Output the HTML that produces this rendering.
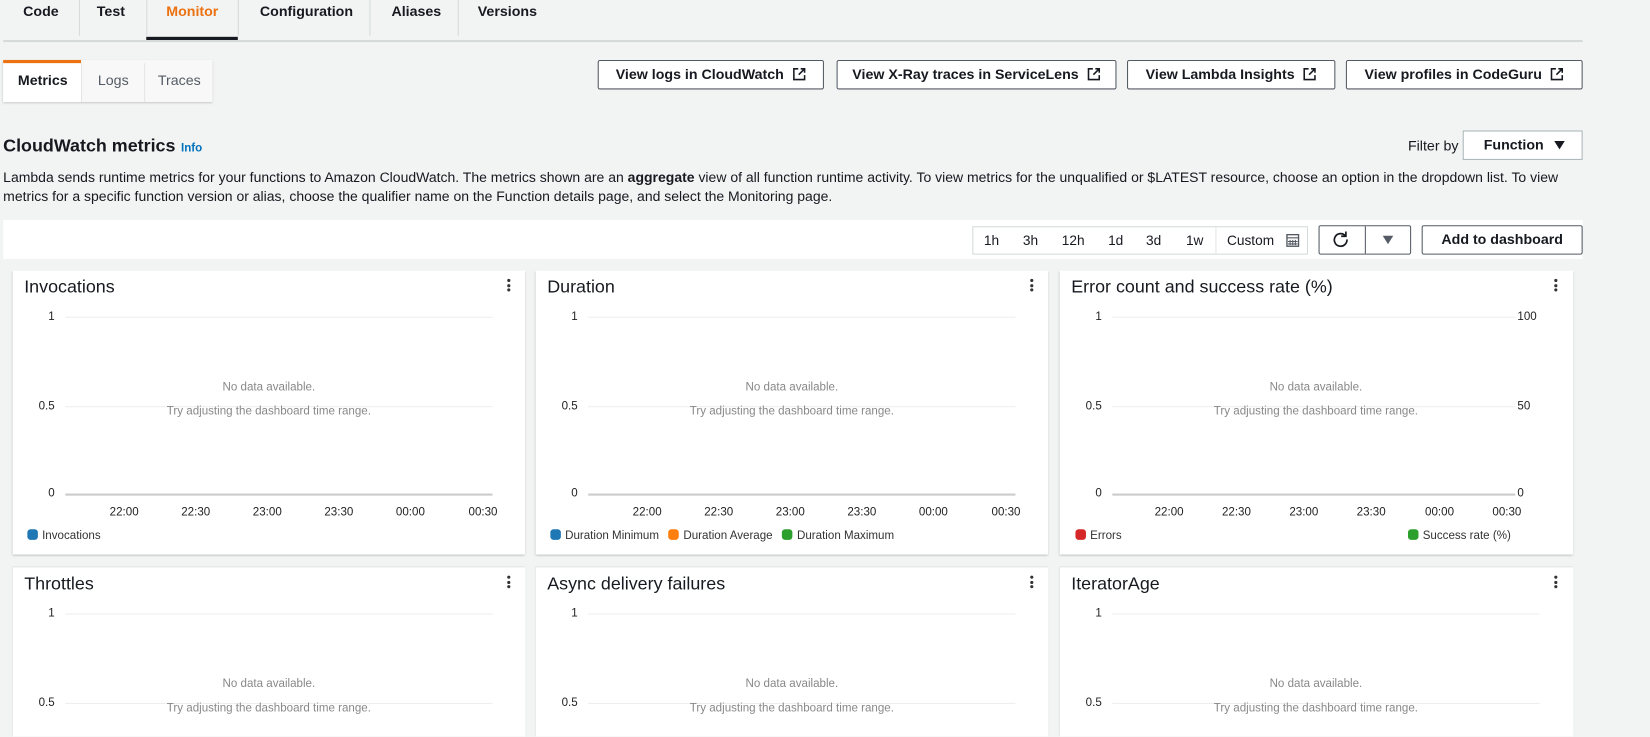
<!DOCTYPE html>
<html><head><meta charset="utf-8">
<style>
html,body{margin:0;padding:0;width:1650px;height:737px;overflow:hidden;background:#f2f3f3}
#s{position:absolute;left:0;top:0;width:1568px;height:700px;overflow:hidden;transform:scale(1.05230);transform-origin:0 0;font-family:"Liberation Sans",Arial,sans-serif;color:#16191f}
.a{position:absolute;white-space:nowrap}
.tab{font-size:13.5px;top:3px;font-weight:bold;color:#16191f}
.sep{position:absolute;top:0;width:1px;height:34px;background:#d5dbdb}
.btn{position:absolute;top:57px;height:26px;border:1px solid #545b64;background:#fff;border-radius:2px;font-size:13.5px;font-weight:bold;line-height:26px;text-align:center;box-sizing:content-box}
.btn svg{vertical-align:-2px;margin-left:8px}
.w{position:absolute;width:487px;height:270px;background:#fff;box-shadow:0 1px 2px rgba(0,0,0,.3)}
.w.r2{height:161px;box-shadow:0 0 1px rgba(0,0,0,.3)}
.w .t{position:absolute;left:11px;top:6px;font-size:17px;font-family:Arial,"Liberation Sans",sans-serif}
.w .k{position:absolute;left:470px;top:8px;width:3px}
.w .k i{display:block;width:3px;height:3px;background:#333;border-radius:50%;margin-bottom:1.5px}
.yl{position:absolute;font-size:11px;color:#222;text-align:right;width:30px;left:10px}
.yr{position:absolute;font-size:11px;color:#222;left:435px}
.gl{position:absolute;left:50px;width:406px;height:1px;background:#eee}
.xl{position:absolute;font-size:11px;color:#222;top:224px;width:40px;margin-left:-20px;text-align:center}
.nd{position:absolute;left:0;width:487px;text-align:center;font-size:11px;color:#888}
.lg{position:absolute;top:246px;font-size:11px;color:#333}
.lg b{display:inline-block;width:10px;height:10px;border-radius:3px;vertical-align:-1px;margin-right:4px}
</style></head><body><div id="s">

<div class="a tab" style="left:22px">Code</div>
<div class="a tab" style="left:92px">Test</div>
<div class="a tab" style="left:158px;color:#ec7211">Monitor</div>
<div class="a tab" style="left:247px">Configuration</div>
<div class="a tab" style="left:372px">Aliases</div>
<div class="a tab" style="left:454px">Versions</div>
<div class="sep" style="left:75px"></div><div class="sep" style="left:139px"></div><div class="sep" style="left:226px"></div><div class="sep" style="left:351px"></div><div class="sep" style="left:435px"></div>
<div class="a" style="left:3px;top:38px;width:1501px;height:2px;background:#d5dbdb"></div>
<div class="a" style="left:139px;top:35px;width:87px;height:3px;background:#16191f"></div>

<div class="a" style="left:3px;top:57px;width:199px;height:40px;background:#f8f8f8;box-shadow:0 1px 2px rgba(0,0,0,.25)"></div>
<div class="a" style="left:3px;top:57px;width:74px;height:40px;background:#fff"></div>
<div class="a" style="left:3px;top:57px;width:74px;height:3px;background:#ec7211"></div>
<div class="a" style="left:77px;top:60px;width:1px;height:37px;background:#e5e5e5"></div>
<div class="a" style="left:137px;top:60px;width:1px;height:37px;background:#e5e5e5"></div>
<div class="a" style="left:17px;top:69px;font-size:13.5px;font-weight:bold">Metrics</div>
<div class="a" style="left:93px;top:69px;font-size:13.5px;color:#545b64">Logs</div>
<div class="a" style="left:150px;top:69px;font-size:13.5px;color:#545b64">Traces</div>

<svg width="0" height="0" style="position:absolute"><defs><symbol id="ex" viewBox="0 0 14 14"><path d="M6 1.5H1.5v11h11V8M8.5 1.5h4v4M12.5 1.5L6.5 7.5" fill="none" stroke="#16191f" stroke-width="1.6"/></symbol></defs></svg>
<div class="btn" style="left:568px;width:213px">View logs in CloudWatch<svg width="13" height="13"><use href="#ex"/></svg></div>
<div class="btn" style="left:795px;width:264px">View X-Ray traces in ServiceLens<svg width="13" height="13"><use href="#ex"/></svg></div>
<div class="btn" style="left:1071px;width:196px">View Lambda Insights<svg width="13" height="13"><use href="#ex"/></svg></div>
<div class="btn" style="left:1279px;width:223px">View profiles in CodeGuru<svg width="13" height="13"><use href="#ex"/></svg></div>

<div class="a" style="left:3px;top:129px;font-size:17px;font-weight:bold">CloudWatch metrics</div>
<div class="a" style="left:172px;top:135px;font-size:11px;font-weight:bold;color:#0073bb">Info</div>
<div class="a" style="left:1338px;top:131px;font-size:13.5px">Filter by</div>
<div class="a" style="left:1390px;top:124px;width:112px;height:26px;border:1px solid #aab7b8;background:#fff;font-size:13.5px;font-weight:bold;line-height:26px"><span style="margin-left:19px">Function</span><span style="position:absolute;left:86px;top:9px;width:0;height:0;border-left:5px solid transparent;border-right:5px solid transparent;border-top:8px solid #16191f"></span></div>
<div class="a" style="left:3px;top:160px;font-size:13.3px;line-height:18px">Lambda sends runtime metrics for your functions to Amazon CloudWatch. The metrics shown are an <b>aggregate</b> view of all function runtime activity. To view metrics for the unqualified or $LATEST resource, choose an option in the dropdown list. To view<br>metrics for a specific function version or alias, choose the qualifier name on the Function details page, and select the Monitoring page.</div>

<div class="a" style="left:3px;top:209px;width:1501px;height:37px;background:#fff"></div>
<div class="a" style="left:924px;top:215px;width:317px;height:25px;border:1px solid #d5dbdb;background:#fff;font-size:13px;color:#16191f;line-height:26px">
<span class="a" style="left:10px">1h</span><span class="a" style="left:47px">3h</span><span class="a" style="left:84px">12h</span><span class="a" style="left:128px">1d</span><span class="a" style="left:164px">3d</span><span class="a" style="left:202px">1w</span>
<span class="a" style="left:230px;top:0;width:1px;height:25px;background:#e5e5e5"></span>
<span class="a" style="left:241px">Custom</span>
<svg class="a" style="left:297px;top:6px" width="13" height="13" viewBox="0 0 13 13"><rect x="1" y="1" width="11" height="11" fill="none" stroke="#545b64" stroke-width="1.3"/><path d="M1 4h11M4 6v5M6.5 6v5M9 6v5M2 7.5h9M2 9.8h9" stroke="#545b64" stroke-width="1"/></svg></div>
<div class="a" style="left:1253px;top:214px;width:86px;height:26px;border:1px solid #545b64;background:#fff;border-radius:2px"></div>
<div class="a" style="left:1297px;top:215px;width:1px;height:26px;background:#545b64"></div>
<svg class="a" style="left:1266px;top:219px" width="16" height="16" viewBox="0 0 16 16"><path d="M12.5 5A6 6 0 1 0 14 8.5" fill="none" stroke="#16191f" stroke-width="1.6"/><path d="M13 1v4.5H8.5" fill="none" stroke="#16191f" stroke-width="1.6"/></svg>
<div class="a" style="left:1314px;top:224px;width:0;height:0;border-left:5px solid transparent;border-right:5px solid transparent;border-top:8px solid #545b64"></div>
<div class="btn" style="left:1351px;top:214px;width:151px">Add to dashboard</div>

<div class="w" style="left:12px;top:257px">
<div class="t">Invocations</div><div class="k"><i></i><i></i><i></i></div>
<div class="yl" style="top:38px">1</div><div class="yl" style="top:123px">0.5</div><div class="yl" style="top:206px">0</div>
<div class="gl" style="top:44px"></div><div class="gl" style="top:129px"></div><div class="gl" style="top:212px;background:#ccc;height:2px"></div>
<div class="xl" style="left:106px">22:00</div><div class="xl" style="left:174px">22:30</div><div class="xl" style="left:242px">23:00</div><div class="xl" style="left:310px">23:30</div><div class="xl" style="left:378px">00:00</div><div class="xl" style="left:447px">00:30</div>
<div class="nd" style="top:105px">No data available.</div><div class="nd" style="top:128px">Try adjusting the dashboard time range.</div>
<div class="lg" style="left:14px"><b style="background:#1f77b4"></b>Invocations</div>
</div>

<div class="w" style="left:509px;top:257px">
<div class="t">Duration</div><div class="k"><i></i><i></i><i></i></div>
<div class="yl" style="top:38px">1</div><div class="yl" style="top:123px">0.5</div><div class="yl" style="top:206px">0</div>
<div class="gl" style="top:44px"></div><div class="gl" style="top:129px"></div><div class="gl" style="top:212px;background:#ccc;height:2px"></div>
<div class="xl" style="left:106px">22:00</div><div class="xl" style="left:174px">22:30</div><div class="xl" style="left:242px">23:00</div><div class="xl" style="left:310px">23:30</div><div class="xl" style="left:378px">00:00</div><div class="xl" style="left:447px">00:30</div>
<div class="nd" style="top:105px">No data available.</div><div class="nd" style="top:128px">Try adjusting the dashboard time range.</div>
<div class="lg" style="left:14px"><b style="background:#1f77b4"></b>Duration Minimum&nbsp;&nbsp; <b style="background:#ff7f0e"></b>Duration Average&nbsp;&nbsp; <b style="background:#2ca02c"></b>Duration Maximum</div>
</div>

<div class="w" style="left:1007px;top:257px;width:488px">
<div class="t">Error count and success rate (%)</div><div class="k"><i></i><i></i><i></i></div>
<div class="yl" style="top:38px">1</div><div class="yl" style="top:123px">0.5</div><div class="yl" style="top:206px">0</div>
<div class="yr" style="top:38px">100</div><div class="yr" style="top:123px">50</div><div class="yr" style="top:206px">0</div>
<div class="gl" style="top:44px;width:383px"></div><div class="gl" style="top:129px;width:383px"></div><div class="gl" style="top:212px;background:#ccc;height:2px;width:383px"></div>
<div class="xl" style="left:104px">22:00</div><div class="xl" style="left:168px">22:30</div><div class="xl" style="left:232px">23:00</div><div class="xl" style="left:296px">23:30</div><div class="xl" style="left:361px">00:00</div><div class="xl" style="left:425px">00:30</div>
<div class="nd" style="top:105px">No data available.</div><div class="nd" style="top:128px">Try adjusting the dashboard time range.</div>
<div class="lg" style="left:15px"><b style="background:#d62728"></b>Errors</div>
<div class="lg" style="left:331px"><b style="background:#2ca02c"></b>Success rate (%)</div>
</div>

<div class="w r2" style="left:12px;top:539px">
<div class="t">Throttles</div><div class="k"><i></i><i></i><i></i></div>
<div class="yl" style="top:38px">1</div><div class="yl" style="top:123px">0.5</div>
<div class="gl" style="top:44px"></div><div class="gl" style="top:129px"></div>
<div class="nd" style="top:105px">No data available.</div><div class="nd" style="top:128px">Try adjusting the dashboard time range.</div>
</div>
<div class="w r2" style="left:509px;top:539px">
<div class="t">Async delivery failures</div><div class="k"><i></i><i></i><i></i></div>
<div class="yl" style="top:38px">1</div><div class="yl" style="top:123px">0.5</div>
<div class="gl" style="top:44px"></div><div class="gl" style="top:129px"></div>
<div class="nd" style="top:105px">No data available.</div><div class="nd" style="top:128px">Try adjusting the dashboard time range.</div>
</div>
<div class="w r2" style="left:1007px;top:539px;width:488px">
<div class="t">IteratorAge</div><div class="k"><i></i><i></i><i></i></div>
<div class="yl" style="top:38px">1</div><div class="yl" style="top:123px">0.5</div>
<div class="gl" style="top:44px;width:406px"></div><div class="gl" style="top:129px;width:406px"></div>
<div class="nd" style="top:105px">No data available.</div><div class="nd" style="top:128px">Try adjusting the dashboard time range.</div>
</div>

</div></body></html>
